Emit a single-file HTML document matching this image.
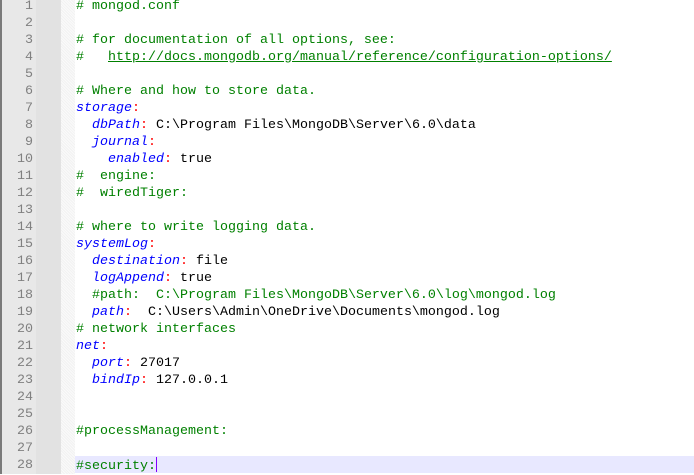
<!DOCTYPE html>
<html><head><style>
body{margin:0;width:694px;height:474px;overflow:hidden;background:#fff;position:relative;font-family:"Liberation Mono",monospace;font-size:13.33px}
.b{position:absolute;left:0;top:0;width:2px;height:474px;background:#7a7a7a}
.n{position:absolute;left:2px;top:0;width:34px;height:474px;background:#e8e8e8}
.m{position:absolute;left:36px;top:0;width:25px;height:474px;background:#e2e2e2}
.f{position:absolute;left:61px;top:0;width:14px;height:474px;background:repeating-linear-gradient(45deg,#f2f2f2 0 1px,#fafafa 1px 2px)}
.cur{position:absolute;left:75px;top:456px;width:619px;height:17px;background:#e8e8ff}
.ln{position:absolute;left:2px;width:31px;text-align:right;color:#808080;height:17px;line-height:17px}
.t{position:absolute;left:76px;height:17px;line-height:17px;white-space:pre;color:#000}
.c{color:#008000}.k{color:#0000ff;font-style:italic}.p{color:#ff0000}.u{text-decoration:underline}
.caret{display:inline-block;width:1px;height:15px;background:#8000ff;vertical-align:-3px}
</style></head><body>
<div class="b"></div><div class="n"></div><div class="m"></div><div class="f"></div><div class="cur"></div>
<div id="c"></div>
<script>
var L=[
'<span class="c"># mongod.conf</span>','',
'<span class="c"># for documentation of all options, see:</span>',
'<span class="c">#   <span class="u">http://docs.mongodb.org/manual/reference/configuration-options/</span></span>','',
'<span class="c"># Where and how to store data.</span>',
'<span class="k">storage</span><span class="p">:</span>',
'  <span class="k">dbPath</span><span class="p">:</span> C:\\Program Files\\MongoDB\\Server\\6.0\\data',
'  <span class="k">journal</span><span class="p">:</span>',
'    <span class="k">enabled</span><span class="p">:</span> true',
'<span class="c">#  engine:</span>',
'<span class="c">#  wiredTiger:</span>','',
'<span class="c"># where to write logging data.</span>',
'<span class="k">systemLog</span><span class="p">:</span>',
'  <span class="k">destination</span><span class="p">:</span> file',
'  <span class="k">logAppend</span><span class="p">:</span> true',
'  <span class="c">#path:  C:\\Program Files\\MongoDB\\Server\\6.0\\log\\mongod.log</span>',
'  <span class="k">path</span><span class="p">:</span>  C:\\Users\\Admin\\OneDrive\\Documents\\mongod.log',
'<span class="c"># network interfaces</span>',
'<span class="k">net</span><span class="p">:</span>',
'  <span class="k">port</span><span class="p">:</span> 27017',
'  <span class="k">bindIp</span><span class="p">:</span> 127.0.0.1','','',
'<span class="c">#processManagement:</span>','',
'<span class="c">#security:</span><span class="caret"></span>'];
var h='';for(var i=0;i<L.length;i++){var y=i*17-2;h+='<div class="ln" style="top:'+y+'px">'+(i+1)+'</div><div class="t" style="top:'+y+'px">'+L[i]+'</div>';}
document.getElementById('c').innerHTML=h;
</script>
</body></html>
